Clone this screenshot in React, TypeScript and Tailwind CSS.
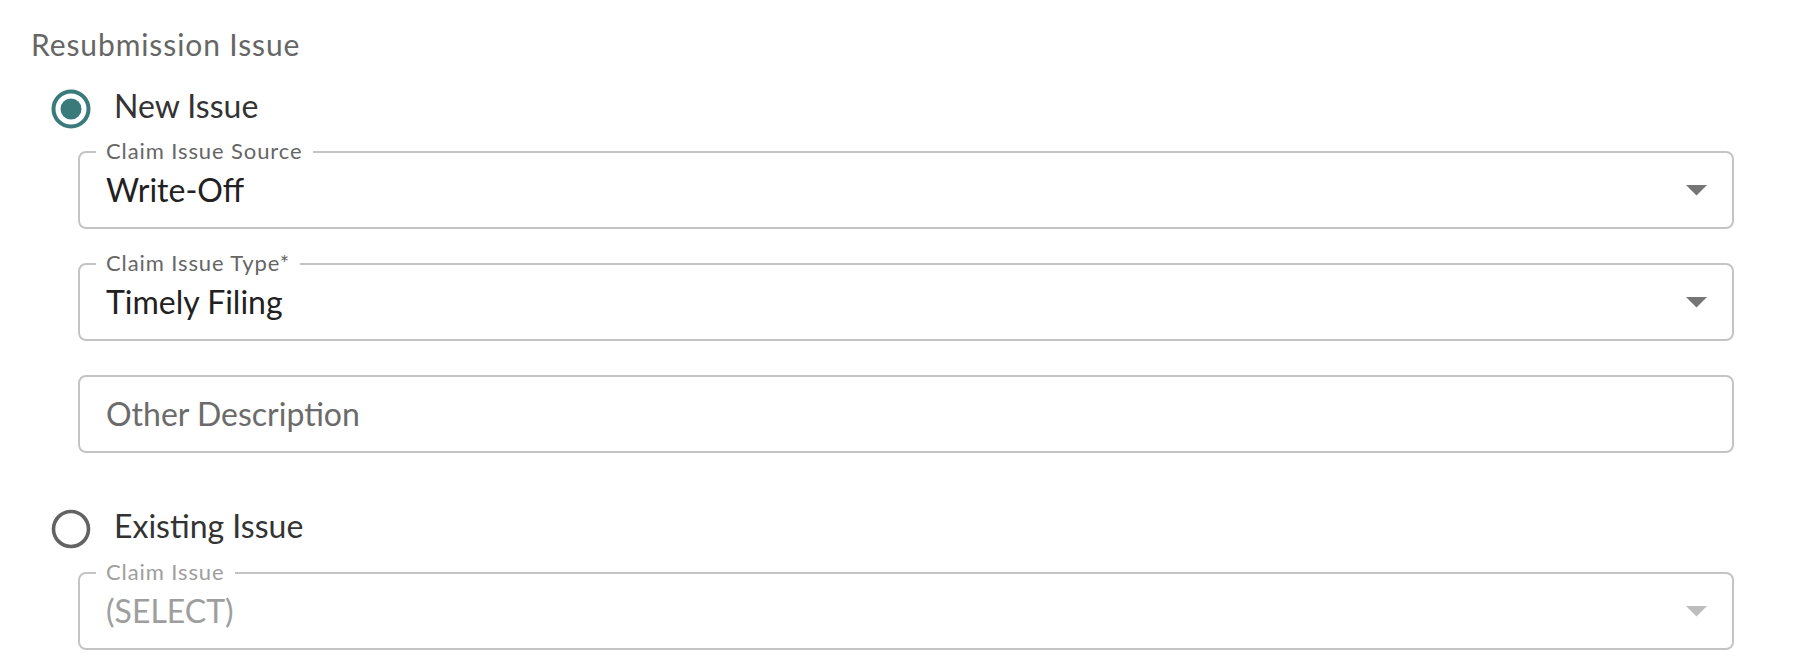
import React from 'react';

const FONT = "font-['Lato','Liberation_Sans',sans-serif]";

const Caret: React.FC<{ disabled?: boolean }> = ({ disabled }) => (
  <svg width="21" height="11" viewBox="0 0 21 11" className="shrink-0">
    <polygon points="0,0 21,0 10.5,10.5" fill={disabled ? '#bdbdbd' : '#757575'} />
  </svg>
);

const RadioDot: React.FC<{ checked?: boolean }> = ({ checked }) => (
  <div className="w-[48px] h-[48px] flex items-center justify-center">
    <svg width="40" height="40" viewBox="0 0 40 40">
      <circle cx="20" cy="20" r="17.5" fill="none" stroke={checked ? '#3a7a7b' : '#636363'} strokeWidth={checked ? 4 : 3.6} />
      {checked && <circle cx="20" cy="20" r="10.5" fill="#3a7a7b" />}
    </svg>
  </div>
);

type FieldProps = {
  label?: string;
  value: string;
  select?: boolean;
  placeholder?: boolean;
  disabled?: boolean;
};

const Field: React.FC<FieldProps> = ({ label, value, select, placeholder, disabled }) => (
  <div className="relative h-[78px] border-2 border-[#c4c4c4] rounded-[8px] pl-[26px] pr-[25px] flex items-center justify-between">
    {label && (
      <span
        className={`absolute left-[16px] -top-[2px] -translate-y-1/2 px-[10px] bg-white text-[22px] leading-[24px] tracking-[0.9px] ${
          disabled ? 'text-[#9e9e9e]' : 'text-[#666666]'
        }`}
      >
        {label}
      </span>
    )}
    <span
      className={`text-[32px] leading-[40px] ${
        disabled ? 'text-[#9e9e9e]' : placeholder ? 'text-[#6b6b6b]' : 'text-[#212121]'
      }`}
    >
      {value}
    </span>
    {select && <Caret disabled={disabled} />}
  </div>
);

const RadioRow: React.FC<{ label: string; checked?: boolean }> = ({ label, checked }) => (
  <div className="flex items-center h-[48px] pl-[47px] gap-[19px]">
    <RadioDot checked={checked} />
    <span className="text-[32px] leading-[40px] pb-[6px] text-[#333333]">{label}</span>
  </div>
);

export default function App() {
  return (
    <div className={`${FONT} bg-white w-[1800px] h-[668px] pt-[26px] overflow-hidden`}>
      <h3 className="pl-[31px] text-[30px] leading-[36px] tracking-[0.9px] text-[#666666]">Resubmission Issue</h3>

      <div className="mt-[23px]">
        <RadioRow label="New Issue" checked />
      </div>

      <div className="ml-[78px] mr-[66px] mt-[18px] flex flex-col gap-[34px]">
        <Field label="Claim Issue Source" value="Write-Off" select />
        <Field label="Claim Issue Type*" value="Timely Filing" select />
        <Field value="Other Description" placeholder />
      </div>

      <div className="mt-[52px]">
        <RadioRow label="Existing Issue" />
      </div>

      <div className="ml-[78px] mr-[66px] mt-[19px]">
        <Field label="Claim Issue" value="(SELECT)" select disabled />
      </div>
    </div>
  );
}
